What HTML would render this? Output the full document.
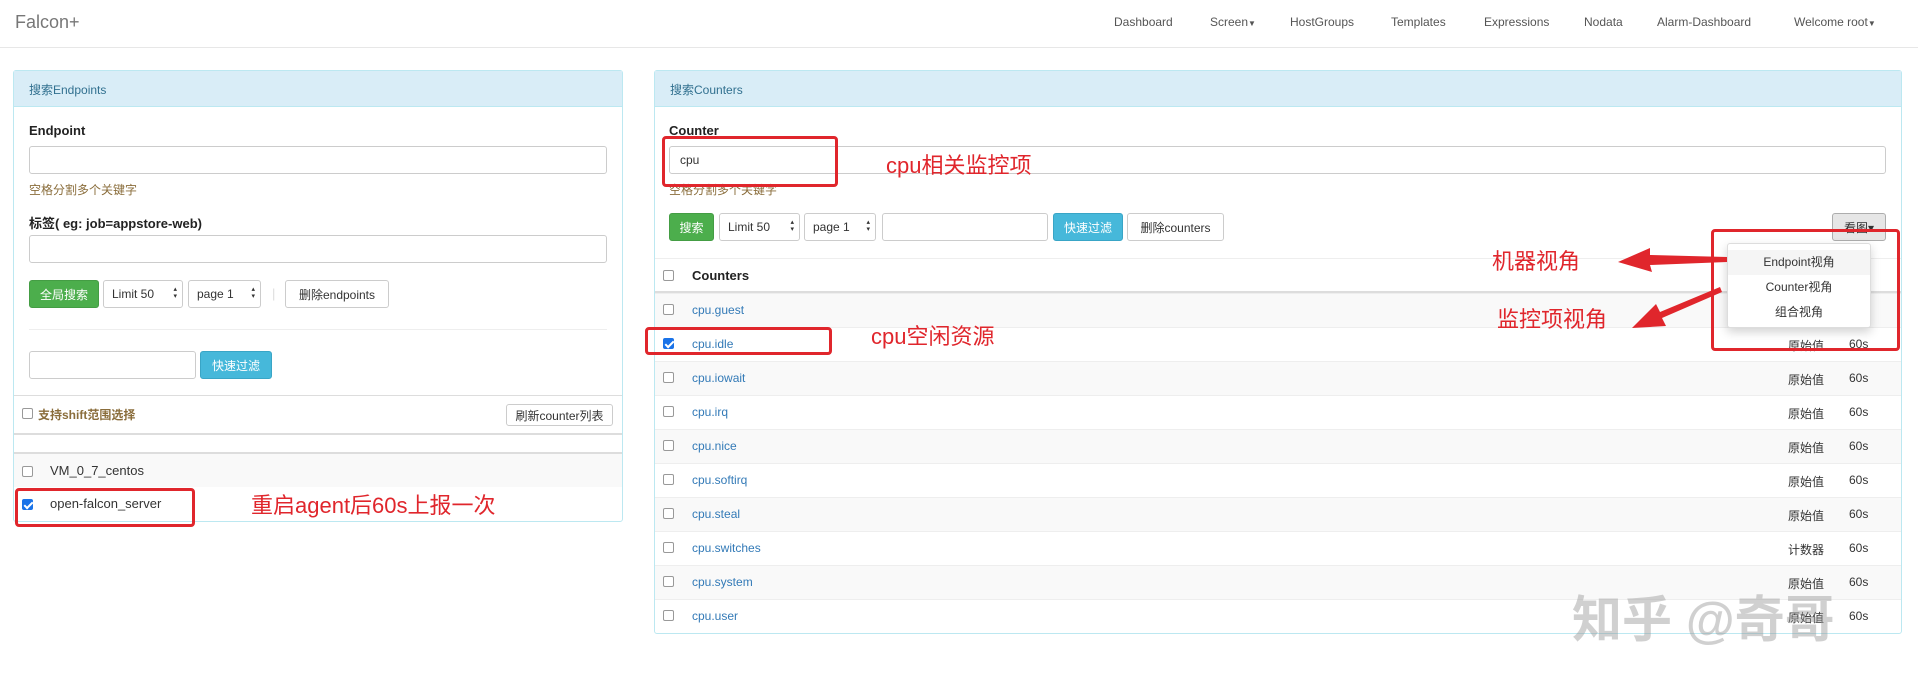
<!DOCTYPE html>
<html><head><meta charset="utf-8"><style>
*{box-sizing:border-box;margin:0;padding:0}
body{width:1918px;height:696px;background:#fff;font-family:"Liberation Sans","Noto Sans CJK SC",sans-serif;font-size:13px;color:#333;position:relative;overflow:hidden}
.a{position:absolute;white-space:nowrap}
.nav{position:absolute;left:0;top:0;width:1918px;height:48px;border-bottom:1px solid #e7e7e7;background:#fff}
.panel{position:absolute;border:1px solid #bce8f1;border-radius:3px;background:#fff}
.ph{position:absolute;left:0;top:0;right:0;height:36px;background:#d9edf7;border-bottom:1px solid #bce8f1;color:#31708f;padding:10px 15px;font-size:12px}
.inp{position:absolute;border:1px solid #ccc;border-radius:3px;background:#fff}
.btn{position:absolute;border:1px solid #ccc;border-radius:3px;background:#fff;font-size:12px;display:flex;align-items:center;justify-content:center}
.g{background:#4cae4c;border-color:#449d44;color:#fff}
.b{background:#46b8da;border-color:#39a5c6;color:#fff}
.sel{justify-content:flex-start;padding-left:8px}
.sel:after{content:"\25B4\A\25BE";white-space:pre;position:absolute;right:5px;top:5px;font-size:7px;line-height:7px}
.lbl{font-weight:bold;font-size:13px;color:#222}
.cb{position:absolute;width:11px;height:11px;border:1px solid #999;border-radius:2px;background:#fff}
.cb.on{background:#1a73e8;border-color:#1a73e8}
.cb.on:after{content:"";position:absolute;left:3px;top:0px;width:3px;height:7px;border:solid #fff;border-width:0 2px 2px 0;transform:rotate(45deg)}
.row{position:absolute;left:0;right:0;height:34px;border-top:1px solid #eee}
.row.s{background:#f9f9f9}
.red{position:absolute;border:3px solid #e0262c;border-radius:4px}
.ann{position:absolute;color:#e0262c;font-size:22px;white-space:nowrap}
.lnk{color:#337ab7;font-size:12px}
.v{position:absolute;font-size:12px;white-space:nowrap}
.nv{position:absolute;top:15px;color:#555;font-size:12px;white-space:nowrap}
</style></head><body>
<div class="nav">
<div class="a" style="left:15px;top:12px;font-size:18px;color:#777">Falcon+</div>
<div class="nv" style="left:1114px">Dashboard</div>
<div class="nv" style="left:1210px">Screen<span style="font-size:8px">▼</span></div>
<div class="nv" style="left:1290px">HostGroups</div>
<div class="nv" style="left:1391px">Templates</div>
<div class="nv" style="left:1484px">Expressions</div>
<div class="nv" style="left:1584px">Nodata</div>
<div class="nv" style="left:1657px">Alarm-Dashboard</div>
<div class="nv" style="left:1794px">Welcome root<span style="font-size:8px">▼</span></div>
</div>

<!-- left panel -->
<div class="panel" style="left:13px;top:70px;width:610px;height:452px">
<div class="ph">搜索Endpoints</div>
</div>
<div class="a lbl" style="left:29px;top:123px">Endpoint</div>
<div class="inp" style="left:29px;top:146px;width:578px;height:28px"></div>
<div class="a" style="left:29px;top:181px;color:#8a6d3b;font-size:12px">空格分割多个关键字</div>
<div class="a lbl" style="left:29px;top:213px">标签( eg: job=appstore-web)</div>
<div class="inp" style="left:29px;top:235px;width:578px;height:28px"></div>
<div class="btn g" style="left:29px;top:280px;width:70px;height:28px">全局搜索</div>
<div class="btn sel" style="left:103px;top:280px;width:80px;height:28px">Limit 50</div>
<div class="btn sel" style="left:188px;top:280px;width:73px;height:28px">page 1</div>
<div class="a" style="left:272px;top:286px;color:#ddd">|</div>
<div class="btn" style="left:285px;top:280px;width:104px;height:28px">删除endpoints</div>
<div class="a" style="left:29px;top:329px;width:578px;border-top:1px solid #eee"></div>
<div class="inp" style="left:29px;top:351px;width:167px;height:28px"></div>
<div class="btn b" style="left:200px;top:351px;width:72px;height:28px">快速过滤</div>
<div class="a" style="left:14px;top:395px;width:608px;border-top:1px solid #ddd"></div>
<div class="cb" style="left:22px;top:408px"></div>
<div class="a" style="left:38px;top:406px;color:#8a6d3b;font-weight:bold;font-size:12px">支持shift范围选择</div>
<div class="btn" style="left:506px;top:404px;width:107px;height:22px">刷新counter列表</div>
<div class="a" style="left:14px;top:433px;width:608px;border-top:2px solid #ddd"></div>
<div class="a" style="left:14px;top:452px;width:608px;height:35px;background:#f9f9f9;border-top:2px solid #ddd"></div>
<div class="cb" style="left:22px;top:466px"></div>
<div class="a" style="left:50px;top:463px">VM_0_7_centos</div>
<div class="cb on" style="left:22px;top:499px"></div>
<div class="a" style="left:50px;top:496px">open-falcon_server</div>
<div class="red" style="left:15px;top:488px;width:180px;height:39px"></div>
<div class="ann" style="left:251px;top:488px">重启agent后60s上报一次</div>

<!-- right panel -->
<div class="panel" style="left:654px;top:70px;width:1248px;height:564px">
<div class="ph">搜索Counters</div>
<div class="row" style="top:187px;height:35px;border-bottom:2px solid #ddd"></div>
<div class="row s" style="top:222px"></div>
<div class="row" style="top:256px"></div>
<div class="row s" style="top:290px"></div>
<div class="row" style="top:324px"></div>
<div class="row s" style="top:358px"></div>
<div class="row" style="top:392px"></div>
<div class="row s" style="top:426px"></div>
<div class="row" style="top:460px"></div>
<div class="row s" style="top:494px"></div>
<div class="row" style="top:528px"></div>
</div>
<div class="a lbl" style="left:669px;top:123px">Counter</div>
<div class="inp" style="left:669px;top:146px;width:1217px;height:28px;padding:6px 10px;font-size:12px">cpu</div>
<div class="a" style="left:669px;top:181px;color:#8a6d3b;font-size:12px">空格分割多个关键字</div>
<div class="btn g" style="left:669px;top:213px;width:45px;height:28px">搜索</div>
<div class="btn sel" style="left:719px;top:213px;width:81px;height:28px">Limit 50</div>
<div class="btn sel" style="left:804px;top:213px;width:72px;height:28px">page 1</div>
<div class="inp" style="left:882px;top:213px;width:166px;height:28px"></div>
<div class="btn b" style="left:1053px;top:213px;width:70px;height:28px">快速过滤</div>
<div class="btn" style="left:1127px;top:213px;width:97px;height:28px">删除counters</div>
<div class="btn" style="left:1832px;top:213px;width:54px;height:28px;background:#e6e6e6;border-color:#adadad">看图▾</div>

<div class="cb" style="left:663px;top:270px"></div>
<div class="a lbl" style="left:692px;top:268px">Counters</div>
<div class="cb" style="left:663px;top:304px"></div><div class="a lnk" style="left:692px;top:303px">cpu.guest</div>
<div class="cb on" style="left:663px;top:338px"></div><div class="a lnk" style="left:692px;top:337px">cpu.idle</div>
<div class="cb" style="left:663px;top:372px"></div><div class="a lnk" style="left:692px;top:371px">cpu.iowait</div>
<div class="cb" style="left:663px;top:406px"></div><div class="a lnk" style="left:692px;top:405px">cpu.irq</div>
<div class="cb" style="left:663px;top:440px"></div><div class="a lnk" style="left:692px;top:439px">cpu.nice</div>
<div class="cb" style="left:663px;top:474px"></div><div class="a lnk" style="left:692px;top:473px">cpu.softirq</div>
<div class="cb" style="left:663px;top:508px"></div><div class="a lnk" style="left:692px;top:507px">cpu.steal</div>
<div class="cb" style="left:663px;top:542px"></div><div class="a lnk" style="left:692px;top:541px">cpu.switches</div>
<div class="cb" style="left:663px;top:576px"></div><div class="a lnk" style="left:692px;top:575px">cpu.system</div>
<div class="cb" style="left:663px;top:610px"></div><div class="a lnk" style="left:692px;top:609px">cpu.user</div>

<div class="v" style="left:1788px;top:337px">原始值</div><div class="v" style="left:1849px;top:337px">60s</div>
<div class="v" style="left:1788px;top:371px">原始值</div><div class="v" style="left:1849px;top:371px">60s</div>
<div class="v" style="left:1788px;top:405px">原始值</div><div class="v" style="left:1849px;top:405px">60s</div>
<div class="v" style="left:1788px;top:439px">原始值</div><div class="v" style="left:1849px;top:439px">60s</div>
<div class="v" style="left:1788px;top:473px">原始值</div><div class="v" style="left:1849px;top:473px">60s</div>
<div class="v" style="left:1788px;top:507px">原始值</div><div class="v" style="left:1849px;top:507px">60s</div>
<div class="v" style="left:1788px;top:541px">计数器</div><div class="v" style="left:1849px;top:541px">60s</div>
<div class="v" style="left:1788px;top:575px">原始值</div><div class="v" style="left:1849px;top:575px">60s</div>
<div class="v" style="left:1788px;top:609px">原始值</div><div class="v" style="left:1849px;top:609px">60s</div>

<!-- dropdown -->
<div class="a" style="left:1727px;top:243px;width:144px;height:85px;background:#fff;border:1px solid #ddd;border-radius:3px;box-shadow:0 4px 10px rgba(0,0,0,.18)">
<div style="height:25px;background:#f5f5f5;margin-top:6px;text-align:center;line-height:25px;font-size:12px">Endpoint视角</div>
<div style="height:25px;text-align:center;line-height:25px;font-size:12px">Counter视角</div>
<div style="height:25px;text-align:center;line-height:25px;font-size:12px">组合视角</div>
</div>

<!-- annotations -->
<div class="red" style="left:662px;top:136px;width:176px;height:51px"></div>
<div class="ann" style="left:886px;top:148px">cpu相关监控项</div>
<div class="red" style="left:645px;top:327px;width:187px;height:28px"></div>
<div class="ann" style="left:871px;top:319px">cpu空闲资源</div>
<div class="red" style="left:1711px;top:229px;width:189px;height:122px"></div>
<div class="ann" style="left:1492px;top:244px">机器视角</div>
<div class="ann" style="left:1497px;top:302px">监控项视角</div>
<svg class="a" style="left:0;top:0" width="1918" height="696">
<path d="M1727 257 L1650 255 L1650 248 L1618 262 L1652 272 L1650 265 L1727 262 Z" fill="#e0262c"/>
<path d="M1720 287 L1660 312 L1656 304 L1632 328 L1666 326 L1662 318 L1722 292 Z" fill="#e0262c"/>
</svg>
<div class="ann" style="left:1572px;top:580px;font-size:50px;color:rgba(150,150,150,.45);font-weight:bold">知乎 @奇哥</div>
</body></html>
